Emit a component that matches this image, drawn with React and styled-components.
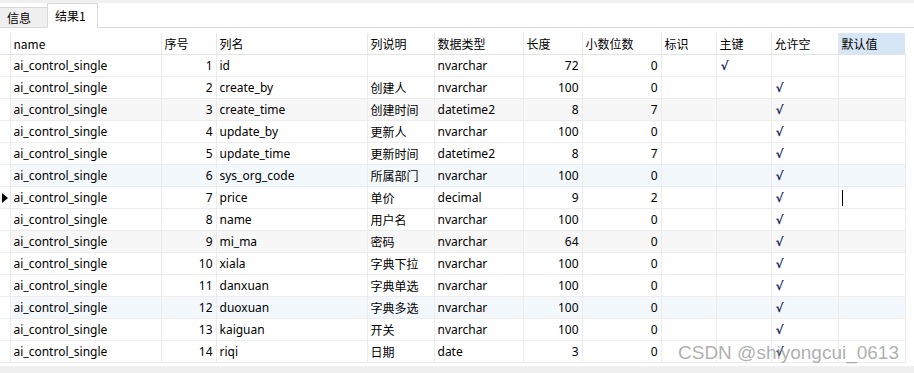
import styled, { createGlobalStyle } from "styled-components";

const GlobalStyle = createGlobalStyle`
  html, body {
    margin: 0;
    padding: 0;
    background: #ffffff;
  }
  body {
    font-family: "Noto Sans", "Noto Sans CJK SC", sans-serif;
    font-size: 12px;
    color: #000;
  }
`;

const columns = [
  { key: "name", title: "name", width: 151 },
  { key: "no", title: "序号", width: 55, right: true },
  { key: "col", title: "列名", width: 151 },
  { key: "desc", title: "列说明", width: 67 },
  { key: "type", title: "数据类型", width: 89 },
  { key: "len", title: "长度", width: 59, right: true },
  { key: "scale", title: "小数位数", width: 79, right: true },
  { key: "ident", title: "标识", width: 55 },
  { key: "pk", title: "主键", width: 55 },
  { key: "nullable", title: "允许空", width: 67 },
  { key: "def", title: "默认值", width: 67, active: true },
];

const rows = [
  ["id", "", "nvarchar", 72, 0, true, false],
  ["create_by", "创建人", "nvarchar", 100, 0, false, true],
  ["create_time", "创建时间", "datetime2", 8, 7, false, true],
  ["update_by", "更新人", "nvarchar", 100, 0, false, true],
  ["update_time", "更新时间", "datetime2", 8, 7, false, true],
  ["sys_org_code", "所属部门", "nvarchar", 100, 0, false, true],
  ["price", "单价", "decimal", 9, 2, false, true],
  ["name", "用户名", "nvarchar", 100, 0, false, true],
  ["mi_ma", "密码", "nvarchar", 64, 0, false, true],
  ["xiala", "字典下拉", "nvarchar", 100, 0, false, true],
  ["danxuan", "字典单选", "nvarchar", 100, 0, false, true],
  ["duoxuan", "字典多选", "nvarchar", 100, 0, false, true],
  ["kaiguan", "开关", "nvarchar", 100, 0, false, true],
  ["riqi", "日期", "date", 3, 0, false, true],
];

const SELECTED = 6;

// every third row is tinted, alternating grey and pale blue
const shadeFor = (i) => {
  if ((i + 1) % 3 !== 0) return "#ffffff";
  return ((i + 1) / 3) % 2 === 1 ? "#f7f7f7" : "#f3f8fd";
};

const App = () => {
  return (
    <Page>
      <GlobalStyle />
      <TopStrip />
      <TabBar>
        <Tab>信息</Tab>
        <Tab $active>结果1</Tab>
        <TabFill />
      </TabBar>
      <Spacer />
      <Grid>
        <colgroup>
          <col style={{ width: 10 }} />
          {columns.map((c) => (
            <col key={c.key} style={{ width: c.width }} />
          ))}
        </colgroup>
        <thead>
          <tr>
            <Gutter as="th" $head />
            {columns.map((c) => (
              <HeadCell key={c.key} $active={c.active}>
                {c.title}
              </HeadCell>
            ))}
          </tr>
        </thead>
        <tbody>
          {rows.map((r, i) => (
            <Row key={i} $bg={shadeFor(i)}>
              <Gutter>{i === SELECTED && <Pointer />}</Gutter>
              <Cell>ai_control_single</Cell>
              <Cell $right>{i + 1}</Cell>
              <Cell>{r[0]}</Cell>
              <Cell>{r[1]}</Cell>
              <Cell>{r[2]}</Cell>
              <Cell $right>{r[3]}</Cell>
              <Cell $right>{r[4]}</Cell>
              <Cell />
              <Cell>{r[5] && <Check>√</Check>}</Cell>
              <Cell>{r[6] && <Check>√</Check>}</Cell>
              <Cell>{i === SELECTED && <Caret />}</Cell>
            </Row>
          ))}
        </tbody>
      </Grid>
      <BottomBar />
      <Watermark>CSDN @shiyongcui_0613</Watermark>
    </Page>
  );
};

const Page = styled.div`
  position: relative;
  width: 914px;
  height: 373px;
  overflow: hidden;
  background: #ffffff;
  display: flex;
  flex-direction: column;
`;

const TopStrip = styled.div`
  height: 3px;
  background: #f0f0f0;
`;

const TabBar = styled.div`
  display: flex;
  align-items: flex-end;
  height: 25px;
`;

const Tab = styled.div`
  box-sizing: border-box;
  flex: none;
  width: ${(p) => (p.$active ? "51px" : "47px")};
  height: ${(p) => (p.$active ? "25px" : "21px")};
  padding-left: ${(p) => (p.$active ? "7px" : "7px")};
  display: flex;
  align-items: center;
  white-space: nowrap;
  font-family: "Noto Sans CJK SC", sans-serif;
  font-size: 12px;
  background: ${(p) => (p.$active ? "#ffffff" : "#f0f0f0")};
  border-top: 1px solid #d9d9d9;
  border-left: ${(p) => (p.$active ? "1px solid #d9d9d9" : "none")};
  border-right: ${(p) => (p.$active ? "1px solid #d9d9d9" : "none")};
  border-bottom: 1px solid ${(p) => (p.$active ? "#ffffff" : "#dadada")};
`;

const TabFill = styled.div`
  flex: 1;
  border-bottom: 1px solid #dadada;
`;

const Spacer = styled.div`
  height: 5px;
`;

const Grid = styled.table`
  table-layout: fixed;
  border-collapse: collapse;
  width: 905px;
  font-family: "Noto Sans", "Noto Sans CJK SC", sans-serif;
  font-size: 12px;
`;

const HeadCell = styled.th`
  box-sizing: border-box;
  height: 21px;
  padding: 0 3px;
  text-align: left;
  font-weight: normal;
  font-family: "Noto Sans CJK SC", sans-serif;
  white-space: nowrap;
  overflow: hidden;
  background: ${(p) => (p.$active ? "#d7e6f6" : "#ffffff")};
  border-left: 1px solid #e8e8e8;
  border-bottom: 1px solid #e3e3e3;
`;

const Row = styled.tr`
  background: ${(p) => p.$bg};
`;

const Gutter = styled.td`
  position: relative;
  padding: 0;
  height: 21px;
  background: #ffffff;
  border-bottom: 1px solid ${(p) => (p.$head ? "#e3e3e3" : "#ececec")};
`;

const Cell = styled.td`
  position: relative;
  box-sizing: border-box;
  height: 22px;
  padding: 0 3px;
  text-align: ${(p) => (p.$right ? "right" : "left")};
  white-space: nowrap;
  overflow: hidden;
  border-left: 1px solid #ececec;
  border-right: 1px solid #ececec;
  border-bottom: 1px solid #ececec;
`;

const Check = styled.span`
  color: #10205a;
  font-family: "DejaVu Sans", sans-serif;
  font-weight: bold;
  font-size: 12px;
  padding-left: 1px;
`;

const Pointer = styled.span`
  position: absolute;
  left: 2px;
  top: 6px;
  width: 0;
  height: 0;
  border-top: 5px solid transparent;
  border-bottom: 5px solid transparent;
  border-left: 6px solid #000;
`;

const Caret = styled.span`
  position: absolute;
  left: 3px;
  top: 3px;
  width: 1px;
  height: 16px;
  background: #000;
`;

const BottomBar = styled.div`
  margin-top: 3px;
  flex: 1;
  background: #f0f0f0;
`;

const Watermark = styled.div`
  position: absolute;
  right: 15px;
  bottom: 9px;
  font-family: "Liberation Sans", Arial, sans-serif;
  font-size: 19px;
  color: rgba(140, 140, 140, 0.7);
  pointer-events: none;
`;

export default App;
